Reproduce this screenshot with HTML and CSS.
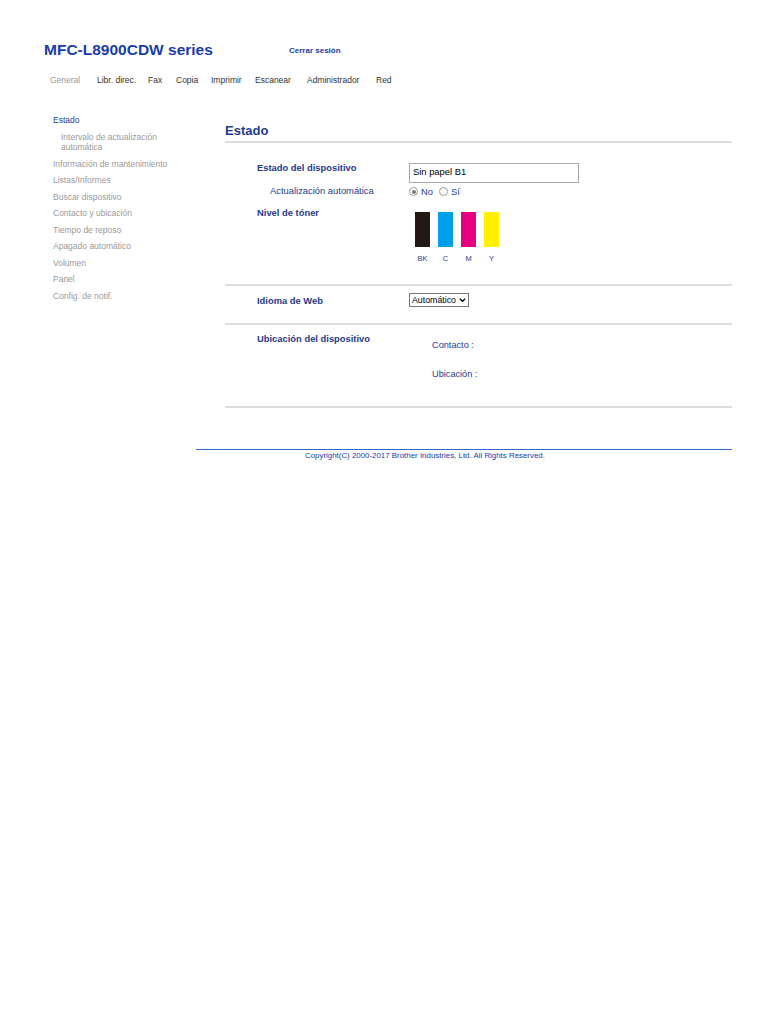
FILE: index.html
```html
<!DOCTYPE html>
<html lang="es">
<head>
<meta charset="utf-8">
<title>MFC-L8900CDW series</title>
<link rel="stylesheet" href="styles.css">
</head>
<body>
<div class="page">
  <header class="top">
    <h1 class="model">MFC-L8900CDW series</h1>
    <a class="logout" href="#">Cerrar sesión</a>
  </header>
  <nav class="tabs">
    <span class="tab current">General</span>
    <span class="tab">Libr. direc.</span>
    <span class="tab">Fax</span>
    <span class="tab">Copia</span>
    <span class="tab">Imprimir</span>
    <span class="tab">Escanear</span>
    <span class="tab">Administrador</span>
    <span class="tab">Red</span>
  </nav>
  <div class="body">
    <aside class="side">
      <div class="side-item active">Estado</div>
      <div class="side-item sub">Intervalo de actualización automática</div>
      <div class="side-item">Información de mantenimiento</div>
      <div class="side-item">Listas/Informes</div>
      <div class="side-item">Buscar dispositivo</div>
      <div class="side-item">Contacto y ubicación</div>
      <div class="side-item">Tiempo de reposo</div>
      <div class="side-item">Apagado automático</div>
      <div class="side-item">Volumen</div>
      <div class="side-item">Panel</div>
      <div class="side-item">Config. de notif.</div>
    </aside>
    <main class="main">
      <h2 class="title">Estado</h2>
      <section class="block first">
        <div class="row">
          <div class="label">Estado del dispositivo</div>
          <div class="value"><div class="status-box">Sin papel B1</div></div>
        </div>
        <div class="row auto">
          <div class="label sub">Actualización automática</div>
          <div class="value radios">
            <span class="radio checked"></span><span class="rtext">No</span>
            <span class="radio"></span><span class="rtext">Sí</span>
          </div>
        </div>
        <div class="row toner-row">
          <div class="label">Nivel de tóner</div>
          <div class="value toners">
            <div class="toner"><div class="bar bk"></div><span>BK</span></div>
            <div class="toner"><div class="bar c"></div><span>C</span></div>
            <div class="toner"><div class="bar m"></div><span>M</span></div>
            <div class="toner"><div class="bar y"></div><span>Y</span></div>
          </div>
        </div>
      </section>
      <section class="block lang">
        <div class="row">
          <div class="label">Idioma de Web</div>
          <div class="value"><div class="select">Automático <svg width="8" height="6" viewBox="0 0 8 6"><path d="M1 1.5 L4 4.5 L7 1.5" fill="none" stroke="#000" stroke-width="1.5"/></svg></div></div>
        </div>
      </section>
      <section class="block loc">
        <div class="row">
          <div class="label">Ubicación del dispositivo</div>
          <div class="value locvals">
            <div class="locitem">Contacto :</div>
            <div class="locitem">Ubicación :</div>
          </div>
        </div>
      </section>
    </main>
  </div>
  <footer class="foot">Copyright(C) 2000-2017 Brother Industries, Ltd. All Rights Reserved.</footer>
</div>
</body>
</html>
```

FILE: styles.css
```css
* { box-sizing: border-box; }
html, body { margin: 0; padding: 0; background: #fff; }
body { font-family: "Liberation Sans", Arial, sans-serif; color: #222; }
.page { width: 768px; padding: 0 36px 0 44px; }
.top { display: flex; align-items: baseline; padding-top: 41px; height: 68px; }
.model { margin: 0; font-size: 15.5px; font-weight: bold; color: #1a3caa; width: 245px; letter-spacing: 0; }
.logout { font-size: 8px; font-weight: bold; color: #1a3caa; text-decoration: none; position: relative; top: -2px; }
.tabs { display: flex; font-size: 8.5px; color: #333; padding-left: 6px; height: 44px; padding-top: 7px; }
.tab:nth-child(1) { width: 47px; }
.tab:nth-child(2) { width: 51px; }
.tab:nth-child(3) { width: 28px; }
.tab:nth-child(4) { width: 35px; }
.tab:nth-child(5) { width: 44px; }
.tab:nth-child(6) { width: 52px; }
.tab:nth-child(7) { width: 69px; }
.tab.current { color: #999; }
.body { display: flex; }
.side { width: 181px; padding-left: 9px; padding-top: 3px; }
.side-item { font-size: 8.5px; color: #9a9a9a; line-height: 10px; margin-bottom: 6.5px; }
.side-item.active { color: #1a3caa; }
.side-item.sub { padding-left: 8px; width: 130px; margin-bottom: 7px; }
.main { flex: 1; }
.title { margin: 0; font-size: 13px; font-weight: bold; color: #1f3a8c; padding-top: 11px; height: 31px; border-bottom: 2px solid #ddd; }
.block { border-bottom: 2px solid #ddd; padding-left: 32px; }
.block.first { padding-top: 19px; height: 143px; }
.row { display: flex; }
.label { width: 152px; font-size: 9.4px; font-weight: bold; color: #1f3a8c; }
.label.sub { font-weight: normal; padding-left: 13px; }
.status-box { width: 170px; height: 20px; border: 1px solid #aaa; font-size: 9.4px; color: #000; padding: 2px 3px; margin-top: 1px; }
.row.auto { margin-top: 2px; height: 20px; }
.radios { display: flex; align-items: center; height: 13px; font-size: 9.4px; color: #1a3caa; }
.radio { width: 9px; height: 9px; border-radius: 50%; border: 1px solid #999; display: inline-block; margin-right: 3px; position: relative; }
.radio.checked::after { content: ""; position: absolute; left: 1.5px; top: 1.5px; width: 4px; height: 4px; border-radius: 50%; background: #777; }
.rtext { margin-right: 6px; }
.toner-row { margin-top: 2px; }
.toners { display: flex; padding-left: 6px; padding-top: 5px; }
.toner { width: 23px; display: flex; flex-direction: column; align-items: center; }
.toner span { font-size: 7.5px; color: #1f3a8c; margin-top: 7px; margin-right: 8px; }
.bar { width: 15px; height: 35px; margin-right: 8px; }
.bar.bk { background: #231815; }
.bar.c { background: #00a0e9; }
.bar.m { background: #e4007f; }
.bar.y { background: #fff100; }
.block.lang { height: 39px; padding-top: 9px; }
.lang .value { margin-top: -6px; }
.select { display: inline-flex; align-items: center; gap: 3px; height: 14px; border: 1px solid #777; font-size: 8.8px; color: #000; padding: 0 2px; width: 60px; white-space: nowrap; }
.block.loc { height: 83px; padding-top: 8px; }
.locvals { padding-left: 23px; padding-top: 7px; }
.locitem { font-size: 9.2px; color: #1f3a8c; height: 29px; }
.foot { margin-left: 152px; margin-top: 41px; border-top: 1px solid #2f6bc6; font-size: 7.9px; color: #1a3caa; text-align: left; padding-left: 109px; padding-top: 1px; }
```
